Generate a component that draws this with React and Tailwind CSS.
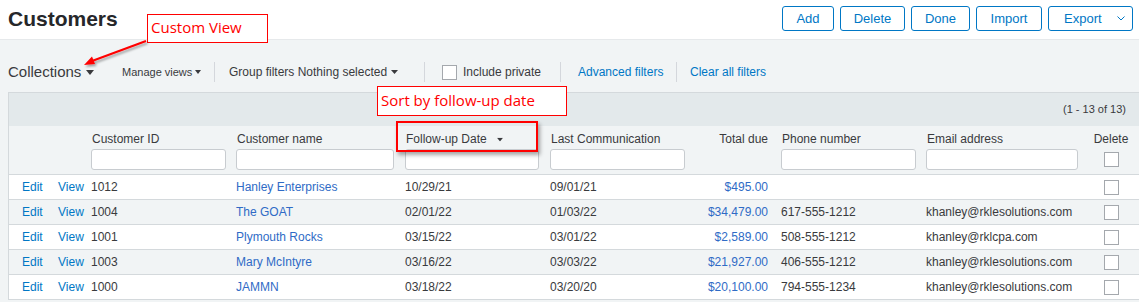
import React from "react";

const cols = "grid grid-cols-[41px_35px_145px_169px_145px_146px_85px_145px_165px_1fr]";

const rows = [
  { id: "1012", name: "Hanley Enterprises", follow: "10/29/21", last: "09/01/21", due: "$495.00", phone: "", email: "" },
  { id: "1004", name: "The GOAT", follow: "02/01/22", last: "01/03/22", due: "$34,479.00", phone: "617-555-1212", email: "khanley@rklesolutions.com" },
  { id: "1001", name: "Plymouth Rocks", follow: "03/15/22", last: "03/01/22", due: "$2,589.00", phone: "508-555-1212", email: "khanley@rklcpa.com" },
  { id: "1003", name: "Mary McIntyre", follow: "03/16/22", last: "03/03/22", due: "$21,927.00", phone: "406-555-1212", email: "khanley@rklesolutions.com" },
  { id: "1000", name: "JAMMN", follow: "03/18/22", last: "03/20/20", due: "$20,100.00", phone: "794-555-1234", email: "khanley@rklesolutions.com" },
];

function Caret({ cls = "" }) {
  return (
    <svg className={cls} width="8" height="5" viewBox="0 0 8 5">
      <path d="M0 0 L8 0 L4 5 Z" fill="#393a3d" />
    </svg>
  );
}

function Sep() {
  return <div className="w-px h-[20px] bg-[#d4d7dc]" />;
}

function Btn({ w, children }) {
  return (
    <div
      className={`${w} h-[25px] border border-[#0077c5] rounded-[3px] bg-white flex items-center justify-center text-[13px] text-[#0077c5]`}
    >
      {children}
    </div>
  );
}

function HInput({ w }) {
  return <div className={`${w} h-[21px] mt-[3px] bg-white border border-[#c8ccd0] rounded-[3px]`} />;
}

function Box() {
  return <div className="w-[15px] h-[15px] bg-white border border-[#a4a8ad]" />;
}

export default function App() {
  return (
    <div className="relative w-[1139px] h-[302px] overflow-hidden bg-[#f1f4f5] text-[#393a3d] font-['Liberation_Sans',Arial,sans-serif]">
      {/* header */}
      <div className="h-[40px] bg-white border-b border-[#e6e9eb] flex items-start justify-between pl-2 pr-[6px]">
        <div className="pt-[6px] text-[21px] leading-[26px] font-bold text-[#26272a]">Customers</div>
        <div className="flex gap-[6px] pt-[6px]">
          <Btn w="w-[52px]">Add</Btn>
          <Btn w="w-[65px]">Delete</Btn>
          <Btn w="w-[59px]">Done</Btn>
          <Btn w="w-[66px]">Import</Btn>
          <div className="w-[85px] h-[25px] border border-[#0077c5] rounded-[3px] bg-white flex items-center text-[13px] text-[#0077c5] pl-[15px]">
            <span>Export</span>
            <svg className="ml-[15px]" width="8" height="5" viewBox="0 0 8 5">
              <path d="M0.5 0.5 L4 4 L7.5 0.5" fill="none" stroke="#0077c5" strokeWidth="1" />
            </svg>
          </div>
        </div>
      </div>

      {/* toolbar */}
      <div className="h-[52px] pt-[22px] pl-2">
        <div className="flex items-center h-[20px]">
          <div className="w-[114px] flex items-center text-[15px]">
            <span>Collections</span>
            <Caret cls="ml-[5px]" />
          </div>
          <div className="w-[92px] flex items-center text-[11px]">
            <span>Manage views</span>
            <svg className="ml-[3px]" width="6" height="4" viewBox="0 0 6 4">
              <path d="M0 0 L6 0 L3 4 Z" fill="#393a3d" />
            </svg>
          </div>
          <Sep />
          <div className="w-[209px] pl-[14px] flex items-center text-[12px]">
            <span>Group filters Nothing selected</span>
            <svg className="ml-[4px]" width="7" height="4" viewBox="0 0 7 4">
              <path d="M0 0 L7 0 L3.5 4 Z" fill="#393a3d" />
            </svg>
          </div>
          <Sep />
          <div className="w-[135px] pl-[17px] flex items-center text-[12px]">
            <Box />
            <span className="ml-[6px]">Include private</span>
          </div>
          <Sep />
          <div className="w-[115px] pl-[17px] text-[12px] text-[#0077c5]">Advanced filters</div>
          <Sep />
          <div className="pl-[13px] text-[12px] text-[#0077c5]">Clear all filters</div>
        </div>
      </div>

      {/* table */}
      <div className="ml-2 border-l border-t border-[#d4d9dc] bg-white">
        <div className="h-[33px] bg-[#e3e9eb] flex items-center justify-end pr-[13px] text-[11px] text-[#393a3d]">
          <span>(1 - 13 of 13)</span>
        </div>
        <div className={`${cols} h-[49px] bg-[#f1f4f5] border-b border-[#d4d9dc] text-[12px] leading-[14px] pt-[6px]`}>
          <div />
          <div />
          <div className="pl-[6px]">
            <div className="pl-px">Customer ID</div>
            <HInput w="w-[135px]" />
          </div>
          <div className="pl-[6px]">
            <div className="pl-px">Customer name</div>
            <HInput w="w-[158px]" />
          </div>
          <div className="pl-[6px]">
            <div className="pl-px flex items-center">
              <span>Follow-up Date</span>
              <Caret cls="ml-[9px] scale-75" />
            </div>
            <HInput w="w-[134px]" />
          </div>
          <div className="pl-[6px]">
            <div className="pl-px">Last Communication</div>
            <HInput w="w-[135px]" />
          </div>
          <div className="pr-[7px] text-right">Total due</div>
          <div className="pl-[6px]">
            <div className="pl-px">Phone number</div>
            <HInput w="w-[135px]" />
          </div>
          <div className="pl-[6px]">
            <div className="pl-px">Email address</div>
            <HInput w="w-[152px]" />
          </div>
          <div className="flex flex-col items-center pr-[2px]">
            <div>Delete</div>
            <div className="mt-[6px]">
              <Box />
            </div>
          </div>
        </div>
        {rows.map((r, i) => (
          <div
            key={r.id}
            className={`${cols} h-[25px] items-center border-b border-[#d4d9dc] text-[12px] ${i % 2 === 1 ? "bg-[#f1f4f5]" : "bg-white"}`}
          >
            <div className="pl-[13px] text-[#0077c5]">Edit</div>
            <div className="pl-[8px] text-[#0077c5]">View</div>
            <div className="pl-[6px]">{r.id}</div>
            <div className="pl-[6px] text-[#2f6bc6]">{r.name}</div>
            <div className="pl-[6px]">{r.follow}</div>
            <div className="pl-[6px]">{r.last}</div>
            <div className="pr-[7px] text-right text-[#2f6bc6]">{r.due}</div>
            <div className="pl-[6px]">{r.phone}</div>
            <div className="pl-[6px]">{r.email}</div>
            <div className="flex justify-center pr-[2px]">
              <Box />
            </div>
          </div>
        ))}
      </div>

      {/* annotations */}
      <div className="absolute left-[147px] top-[14px] w-[121px] h-[29px] bg-white border border-[#ff0000] pl-[3px] text-[15px] leading-[24px] text-[#ff0000] font-['Open_Sans',sans-serif]">
        Custom View
      </div>
      <svg className="absolute left-0 top-0" width="200" height="80" viewBox="0 0 200 80">
        <defs>
          <filter id="sh" x="-20%" y="-20%" width="140%" height="160%">
            <feDropShadow dx="1.5" dy="2" stdDeviation="1.2" floodColor="#000" floodOpacity="0.35" />
          </filter>
        </defs>
        <g filter="url(#sh)">
          <line x1="146" y1="41" x2="92" y2="61" stroke="#ff0000" strokeWidth="2" />
          <path d="M84 65 L92 56.5 L95 64 Z" fill="#ff0000" />
        </g>
      </svg>
      <div className="absolute left-[377px] top-[86px] w-[190px] h-[30px] bg-white border border-[#ff0000] pl-[3px] text-[15px] leading-[26px] text-[#ff0000] font-['Open_Sans',sans-serif]">
        Sort by follow-up date
      </div>
      <div className="absolute left-[396px] top-[121px] w-[142px] h-[31px] border-2 border-[#ff0000] shadow-[2px_3px_4px_rgba(0,0,0,0.35)]" />
    </div>
  );
}
